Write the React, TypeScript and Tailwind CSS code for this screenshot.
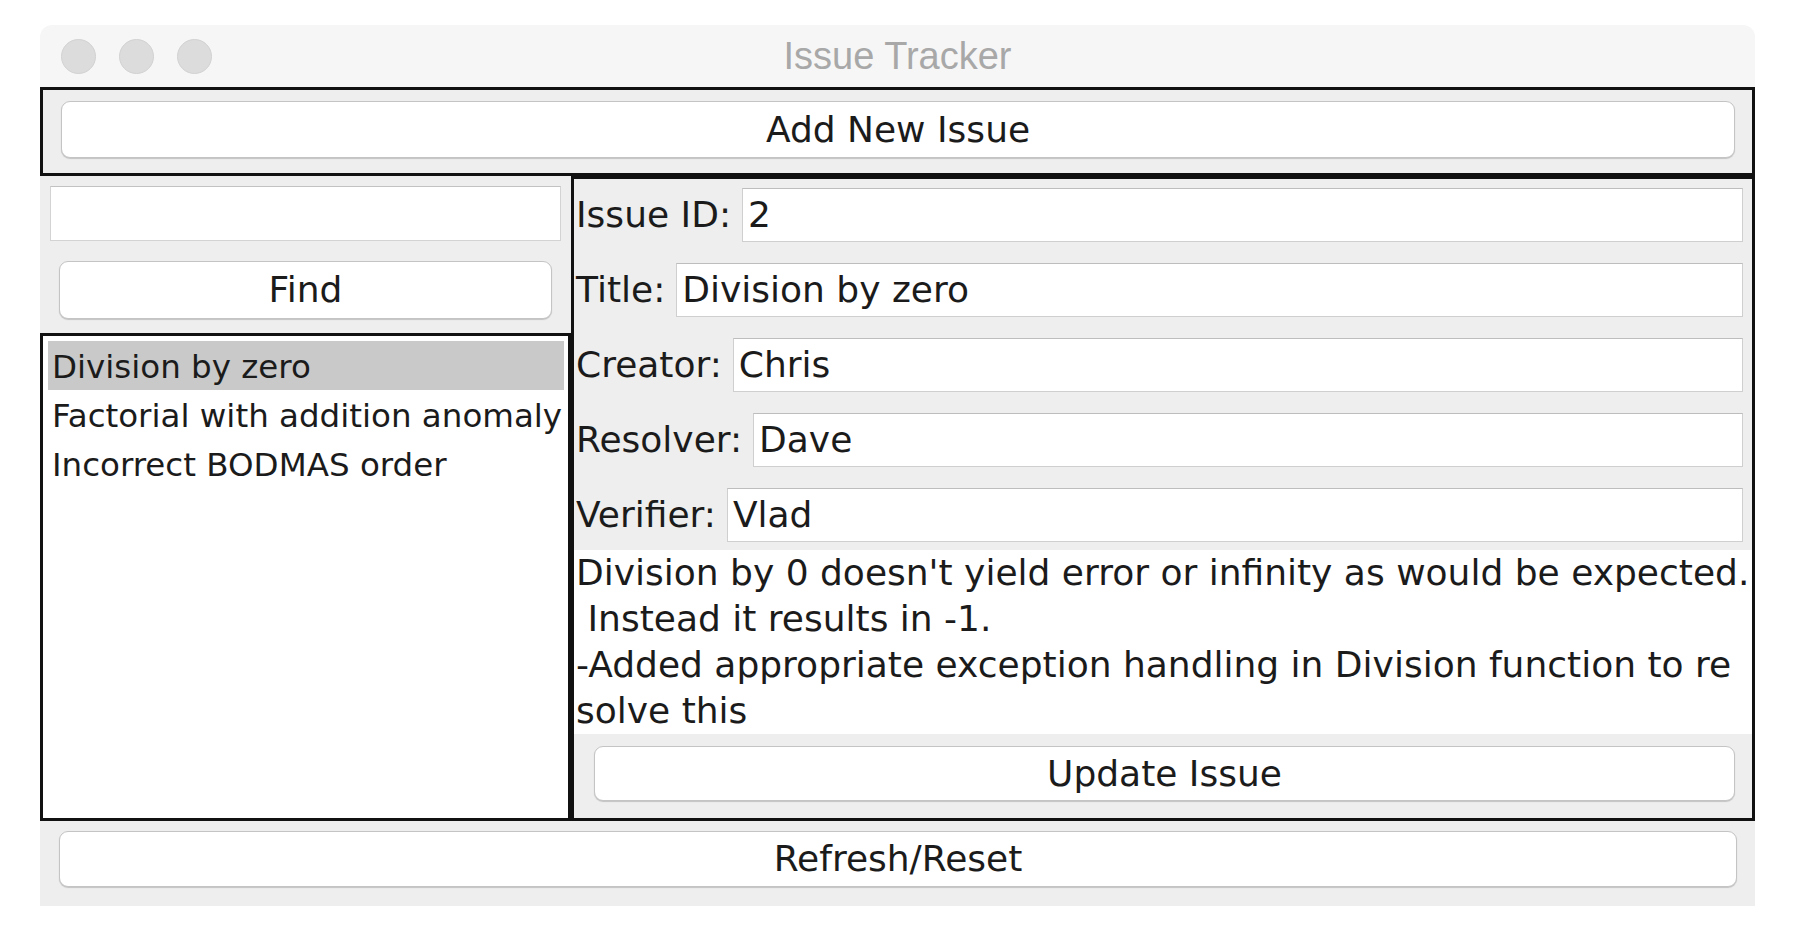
import React from "react";

const font = "font-['DejaVu_Sans',sans-serif]";

function MacButton({ label, className }: { label: string; className: string }) {
  return (
    <div
      className={`flex items-center justify-center bg-white rounded-[9px] border border-[#c4c4c4] shadow-[0_1px_1px_rgba(0,0,0,0.18)] text-[36px] text-[#1b1b1b] ${className}`}
    >
      {label}
    </div>
  );
}

function Field({ value, className }: { value: string; className: string }) {
  return (
    <div
      className={`flex items-center bg-white border border-[#cfcfcf] border-t-[#bdbdbd] pl-[5px] text-[36px] text-[#1b1b1b] ${className}`}
    >
      {value}
    </div>
  );
}

function Row({ label, value }: { label: string; value: string }) {
  return (
    <div className="flex items-center gap-[11px] h-[54px]">
      <span className="whitespace-nowrap text-[36px] text-[#1b1b1b]">{label}</span>
      <Field value={value} className="flex-1 h-[54px]" />
    </div>
  );
}

export default function App() {
  return (
    <div className={`w-[1796px] h-[944px] bg-white ${font}`}>
      <div className="pl-[40px] pt-[25px]">
        <div className="w-[1715px] flex flex-col">
          {/* title bar */}
          <div className="h-[62px] bg-[#f6f6f6] rounded-t-[12px] flex items-center">
            <div className="w-[200px] flex items-center gap-[23px] pl-[21px]">
              <div className="w-[35px] h-[35px] rounded-full bg-[#dcdcdc] border border-[#d2d2d2]" />
              <div className="w-[35px] h-[35px] rounded-full bg-[#dcdcdc] border border-[#d2d2d2]" />
              <div className="w-[35px] h-[35px] rounded-full bg-[#dcdcdc] border border-[#d2d2d2]" />
            </div>
            <div className="flex-1 text-center text-[38px] text-[#a8a8a8] font-['Liberation_Sans',sans-serif]">
              Issue Tracker
            </div>
            <div className="w-[200px]" />
          </div>

          {/* top panel */}
          <div className="h-[89px] border-[3px] border-[#111] bg-[#eeeeee] pt-[11px] pl-[18px] pr-[17px]">
            <MacButton label="Add New Issue" className="h-[57px]" />
          </div>

          {/* middle */}
          <div className="h-[645px] flex">
            {/* left column */}
            <div className="w-[531px] flex flex-col">
              <div className="h-[157px] bg-[#eeeeee] pt-[10px] pl-[10px] pr-[10px] flex flex-col">
                <div className="h-[55px] bg-white border border-[#d3d3d3] border-t-[#c2c2c2]" />
                <MacButton label="Find" className="h-[58px] mt-[20px] mx-[9px]" />
              </div>
              <div className="flex-1 border-[3px] border-[#111] bg-white pt-[5px] pl-[5px] pr-[4px] text-[32.5px] text-[#1b1b1b]">
                <div className="h-[49px] bg-[#c9c9c9] flex items-center pl-[4px] pt-[4px] whitespace-nowrap">
                  Division by zero
                </div>
                <div className="h-[49px] flex items-center pl-[4px] pt-[4px] whitespace-nowrap">
                  Factorial with addition anomaly
                </div>
                <div className="h-[49px] flex items-center pl-[4px] pt-[4px] whitespace-nowrap">
                  Incorrect BODMAS order
                </div>
              </div>
            </div>

            {/* right panel */}
            <div className="flex-1 border-[3px] border-[#111] bg-[#eeeeee] flex flex-col">
              <div className="pt-[9px] pl-[2px] pr-[9px] flex flex-col gap-[21px]">
                <Row label="Issue ID:" value="2" />
                <Row label="Title:" value="Division by zero" />
                <Row label="Creator:" value="Chris" />
                <Row label="Resolver:" value="Dave" />
                <Row label="Verifier:" value="Vlad" />
              </div>
              <div className="mt-[8px] bg-white pl-[2px] text-[36px] leading-[46px] text-[#1b1b1b] whitespace-pre overflow-hidden">
                <div>Division by 0 doesn't yield error or infinity as would be expected.</div>
                <div> Instead it results in -1.</div>
                <div>-Added appropriate exception handling in Division function to re</div>
                <div>solve this</div>
              </div>
              <div className="pt-[12px] pl-[20px] pr-[17px]">
                <MacButton label="Update Issue" className="h-[55px]" />
              </div>
            </div>
          </div>

          {/* bottom */}
          <div className="h-[85px] bg-[#eeeeee] pt-[10px] pl-[19px] pr-[18px]">
            <MacButton label="Refresh/Reset" className="h-[56px]" />
          </div>
        </div>
      </div>
    </div>
  );
}
